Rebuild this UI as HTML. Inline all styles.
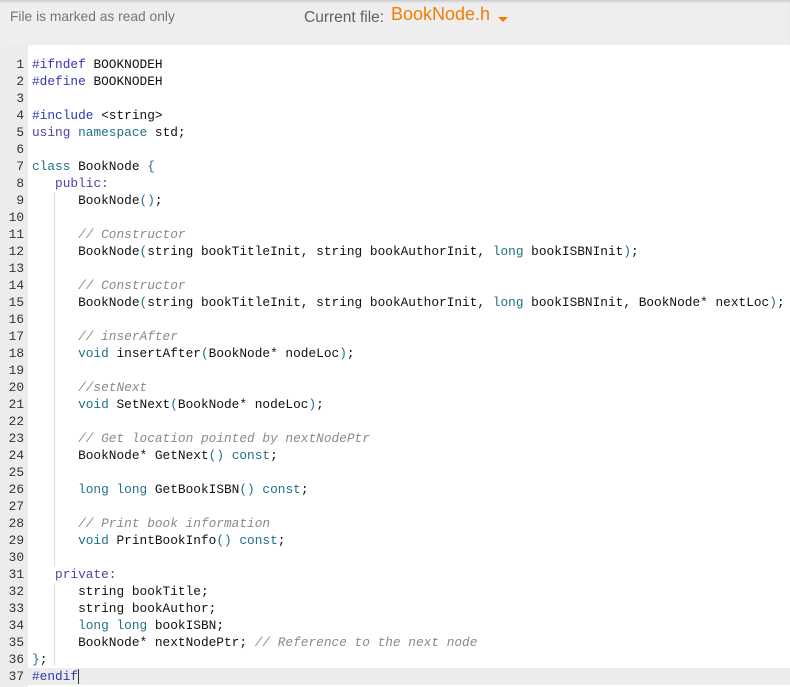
<!DOCTYPE html>
<html><head><style>
body{margin:0;width:790px;height:687px;background:#fff;overflow:hidden;font-family:"Liberation Sans",sans-serif;}
.hdr{position:absolute;left:0;top:0;width:790px;height:45px;background:#eeeeee;box-shadow:inset 0 3px 3px -2px #bbb;}
.ro{position:absolute;left:10px;top:9px;font-size:13.8px;color:#757575;}
.cf{position:absolute;left:304px;top:9px;font-size:15.5px;color:#616161;}
.fn{position:absolute;left:391px;top:4px;font-size:18px;color:#f57c00;}
.arr{position:absolute;left:498px;top:17px;width:0;height:0;border-left:5px solid transparent;border-right:5px solid transparent;border-top:5px solid #f57c00;}
.gut{position:absolute;left:0;top:45px;width:28px;height:642px;background:#ececec;}
.code{position:absolute;left:0;top:56px;font-family:"Liberation Mono",monospace;font-size:12.8px;line-height:17px;color:#111;}
.l{position:relative;height:17px;white-space:pre;}
.n{display:inline-block;width:24px;text-align:right;color:#333;margin-right:8px;}
.pp{color:#3434b4}.kw{color:#5040a8}.t{color:#217088}.c{color:#8a8a8a;font-style:italic}.b{color:#217088}
.cur{background:#ececec;width:790px;}
.g{position:absolute;left:54px;width:1px;background:#ddd;}
</style></head><body>
<div class="hdr"><div class="ro">File is marked as read only</div><div class="cf">Current file:</div><div class="fn">BookNode.h</div><div class="arr"></div></div>
<div class="gut"></div>
<div class="g" style="top:192px;height:374px"></div>
<div class="g" style="top:583px;height:83px"></div>
<div class="code">
<div class="l"><span class="n">1</span><span class="pp">#ifndef</span> BOOKNODEH</div>
<div class="l"><span class="n">2</span><span class="pp">#define</span> BOOKNODEH</div>
<div class="l"><span class="n">3</span></div>
<div class="l"><span class="n">4</span><span class="pp">#include</span> &lt;string&gt;</div>
<div class="l"><span class="n">5</span><span class="kw">using</span> <span class="t">namespace</span> std;</div>
<div class="l"><span class="n">6</span></div>
<div class="l"><span class="n">7</span><span class="t">class</span> BookNode <span class="b">{</span></div>
<div class="l"><span class="n">8</span>   <span class="kw">public:</span></div>
<div class="l"><span class="n">9</span>      BookNode<span class="b">()</span>;</div>
<div class="l"><span class="n">10</span></div>
<div class="l"><span class="n">11</span>      <span class="c">// Constructor</span></div>
<div class="l"><span class="n">12</span>      BookNode<span class="b">(</span>string bookTitleInit, string bookAuthorInit, <span class="t">long</span> bookISBNInit<span class="b">)</span>;</div>
<div class="l"><span class="n">13</span></div>
<div class="l"><span class="n">14</span>      <span class="c">// Constructor</span></div>
<div class="l"><span class="n">15</span>      BookNode<span class="b">(</span>string bookTitleInit, string bookAuthorInit, <span class="t">long</span> bookISBNInit, BookNode* nextLoc<span class="b">)</span>;</div>
<div class="l"><span class="n">16</span></div>
<div class="l"><span class="n">17</span>      <span class="c">// inserAfter</span></div>
<div class="l"><span class="n">18</span>      <span class="t">void</span> insertAfter<span class="b">(</span>BookNode* nodeLoc<span class="b">)</span>;</div>
<div class="l"><span class="n">19</span></div>
<div class="l"><span class="n">20</span>      <span class="c">//setNext</span></div>
<div class="l"><span class="n">21</span>      <span class="t">void</span> SetNext<span class="b">(</span>BookNode* nodeLoc<span class="b">)</span>;</div>
<div class="l"><span class="n">22</span></div>
<div class="l"><span class="n">23</span>      <span class="c">// Get location pointed by nextNodePtr</span></div>
<div class="l"><span class="n">24</span>      BookNode* GetNext<span class="b">()</span> <span class="t">const</span>;</div>
<div class="l"><span class="n">25</span></div>
<div class="l"><span class="n">26</span>      <span class="t">long long</span> GetBookISBN<span class="b">()</span> <span class="t">const</span>;</div>
<div class="l"><span class="n">27</span></div>
<div class="l"><span class="n">28</span>      <span class="c">// Print book information</span></div>
<div class="l"><span class="n">29</span>      <span class="t">void</span> PrintBookInfo<span class="b">()</span> <span class="t">const</span>;</div>
<div class="l"><span class="n">30</span></div>
<div class="l"><span class="n">31</span>   <span class="kw">private:</span></div>
<div class="l"><span class="n">32</span>      string bookTitle;</div>
<div class="l"><span class="n">33</span>      string bookAuthor;</div>
<div class="l"><span class="n">34</span>      <span class="t">long long</span> bookISBN;</div>
<div class="l"><span class="n">35</span>      BookNode* nextNodePtr; <span class="c">// Reference to the next node</span></div>
<div class="l"><span class="n">36</span><span class="b">}</span>;</div>
<div class="l cur"><span class="n">37</span><span class="pp">#endif</span><span style="border-left:1px solid #333;"></span></div>
</div>
</body></html>
